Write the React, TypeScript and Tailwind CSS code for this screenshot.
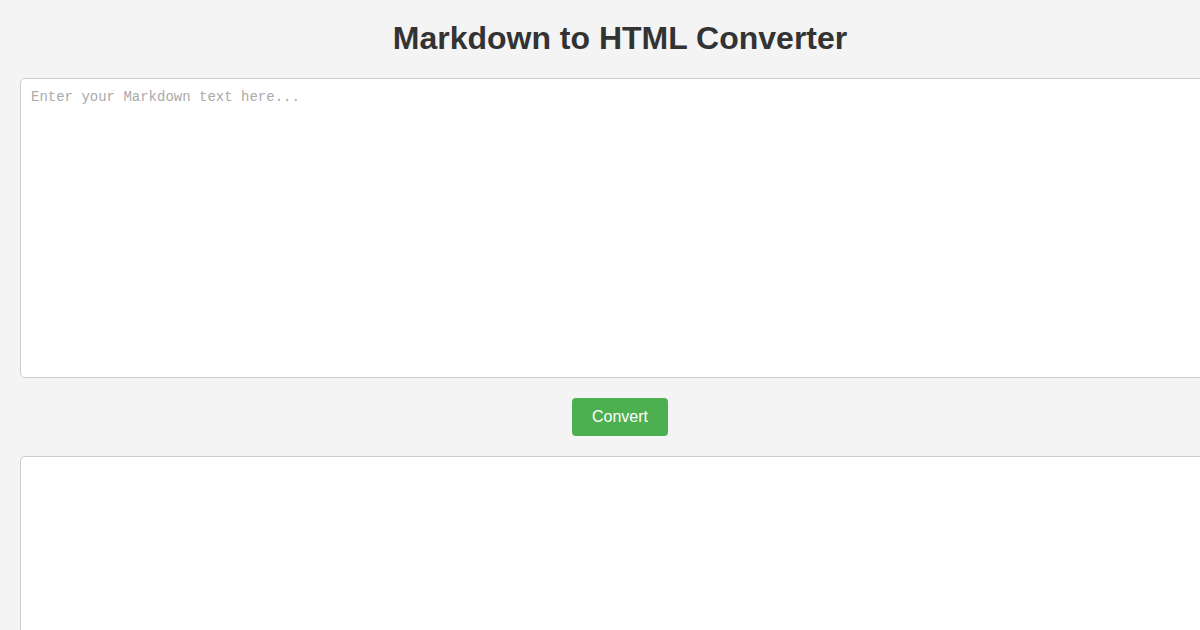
import { useState } from "react"

export default function App() {
  const [markdown, setMarkdown] = useState("")
  const [html, setHtml] = useState("")

  const convert = () => {
    setHtml(markdown)
  }

  return (
    <div className="h-[630px] overflow-hidden bg-[#f4f4f4] p-5 font-['Liberation_Sans',Arial,sans-serif] text-[#333]">
      <div className="w-[1200px]">
        <h1 className="text-center text-[32px] leading-[37px] font-bold mb-[21px]">Markdown to HTML Converter</h1>
        <textarea
          value={markdown}
          onChange={(e) => setMarkdown(e.target.value)}
          placeholder="Enter your Markdown text here..."
          className="block w-full h-[300px] resize-none rounded-[5px] border border-[#ccc] bg-white px-[10px] py-[10px] font-['Liberation_Mono','Courier_New',monospace] text-[14px] leading-[17px] placeholder:text-[#aaa] outline-none"
        />
        <div className="flex justify-center mt-5">
          <button
            onClick={convert}
            className="bg-[#4caf50] text-white text-[16px] leading-[18px] px-5 py-[10px] rounded-[4px]"
          >
            Convert
          </button>
        </div>
        <div
          className="mt-5 min-h-[300px] rounded-[5px] border border-[#ccc] bg-white p-[10px]"
          dangerouslySetInnerHTML={{ __html: html }}
        />
      </div>
    </div>
  )
}
